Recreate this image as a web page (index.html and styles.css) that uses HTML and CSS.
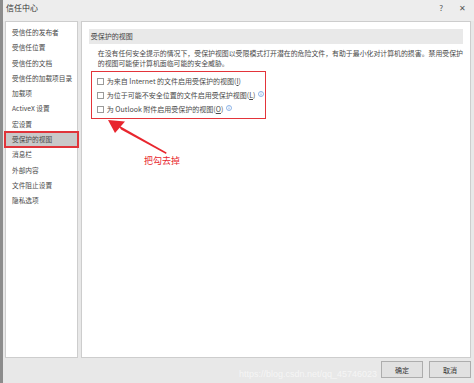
FILE: index.html
```html
<!DOCTYPE html>
<html lang="zh-CN">
<head>
<meta charset="utf-8">
<title>信任中心</title>
<link rel="stylesheet" href="styles.css">
</head>
<body>
<div class="window">
  <div class="titlebar">
    <span class="title">信任中心</span>
    <span class="tb-btns"><span class="help">?</span><span class="close">✕</span></span>
  </div>
  <div class="main">
    <ul class="sidebar">
      <li>受信任的发布者</li>
      <li>受信任位置</li>
      <li>受信任的文档</li>
      <li>受信任的加载项目录</li>
      <li>加载项</li>
      <li>ActiveX 设置</li>
      <li>宏设置</li>
      <li class="active">受保护的视图</li>
      <li>消息栏</li>
      <li>外部内容</li>
      <li>文件阻止设置</li>
      <li>隐私选项</li>
    </ul>
    <div class="content">
      <div class="section-head">受保护的视图</div>
      <p class="desc">在没有任何安全提示的情况下，受保护视图以受限模式打开潜在的危险文件，有助于最小化对计算机的损害。禁用受保护<br>的视图可能使计算机面临可能的安全威胁。</p>
      <div class="options">
        <label class="opt"><span class="cb"></span>为来自 Internet 的文件启用受保护的视图(<u>I</u>)</label>
        <label class="opt"><span class="cb"></span>为位于可能不安全位置的文件启用受保护视图(<u>L</u>)<svg class="info" viewBox="0 0 10 10"><circle cx="5" cy="5" r="4.2" fill="none" stroke="#4a86d8" stroke-width="1"/><rect x="4.5" y="4.2" width="1" height="3.2" fill="#4a86d8"/><rect x="4.5" y="2.5" width="1" height="1" fill="#4a86d8"/></svg></label>
        <label class="opt"><span class="cb"></span>为 Outlook 附件启用受保护的视图(<u>O</u>)<svg class="info" viewBox="0 0 10 10"><circle cx="5" cy="5" r="4.2" fill="none" stroke="#4a86d8" stroke-width="1"/><rect x="4.5" y="4.2" width="1" height="3.2" fill="#4a86d8"/><rect x="4.5" y="2.5" width="1" height="1" fill="#4a86d8"/></svg></label>
      </div>
    </div>
  </div>
  <div class="footer">
    <span class="watermark">https://blog.csdn.net/qq_45746023</span>
    <button class="btn">确定</button>
    <button class="btn">取消</button>
  </div>
  <svg class="arrow" width="474" height="383" viewBox="0 0 474 383">
    <polygon points="108,120 125,121.5 115,133" fill="#e8262e"/>
    <polygon points="118,125 121,129.5 166,154 166.6,152.6" fill="#e8262e"/>
  </svg>
  <div class="note">把勾去掉</div>
</div>
</body>
</html>
```
FILE: styles.css
```css
* { box-sizing: border-box; }
html, body { margin: 0; padding: 0; }
body {
  width: 474px;
  height: 383px;
  overflow: hidden;
  background: #e6e6e6;
  font-family: "Noto Sans CJK SC", "Noto Sans", sans-serif;
  color: #3c3c3c;
}
.window {
  position: relative;
  width: 474px;
  height: 383px;
  display: flex;
  flex-direction: column;
  border-left: 3px solid #8c8c8c;
  background: #e8e8e8;
}
.titlebar {
  height: 21px;
  display: flex;
  align-items: flex-start;
  justify-content: space-between;
  padding: 2px 8px 0 3px;
  background: #ededed;
}
.title { font-size: 8px; line-height: 12px; color: #333; }
.tb-btns { display: flex; gap: 16px; font-size: 8px; line-height: 12px; color: #555; }
.main {
  flex: 1;
  display: flex;
  gap: 3px;
  padding: 0 3px 0 2px;
}
.sidebar {
  list-style: none;
  margin: 0;
  padding: 3px 0 0 0;
  width: 75px;
  background: #fff;
  border: 1px solid #cdcdcd;
}
.sidebar li {
  height: 15.3px;
  line-height: 15.3px;
  font-size: 6.7px;
  padding-left: 6px;
  color: #4a4a4a;
  white-space: nowrap;
}
.sidebar li.active {
  background: #c9c9c9;
  outline: 2px solid #e0343a;
  outline-offset: -1px;
  margin: 0 -1px;
  padding-left: 7px;
}
.content {
  flex: 1;
  background: #fff;
  border: 1px solid #cdcdcd;
  padding: 7px 7px 0 7px;
}
.section-head {
  background: #e9e9e9;
  height: 15px;
  line-height: 15px;
  font-size: 7px;
  padding-left: 2px;
  color: #444;
}
.desc {
  margin: 5px 0 0 9px;
  font-size: 6.9px;
  line-height: 9.5px;
  white-space: nowrap;
  color: #4a4a4a;
}
.options {
  margin: 3px 0 0 2px;
  width: 175px;
  border: 1.5px solid #e3343a;
  padding: 2px 0 2px 5px;
  display: flex;
  flex-direction: column;
}
.opt {
  display: flex;
  align-items: center;
  height: 14px;
  font-size: 7px;
  color: #4a4a4a;
  white-space: nowrap;
}
.opt u { text-decoration: underline; }
.cb {
  width: 7px;
  height: 7px;
  border: 1px solid #9a9a9a;
  background: #fff;
  margin-right: 3px;
  flex: none;
}
.info { width: 6px; height: 6px; margin-left: 3px; margin-top: -3px; }
.footer {
  height: 25px;
  display: flex;
  justify-content: flex-end;
  align-items: flex-start;
  gap: 6px;
  padding: 3px 3px 0 0;
}
.watermark {
  align-self: flex-end;
  margin-bottom: 3px;
  margin-right: -2px;
  font-family: "Liberation Sans", sans-serif;
  font-size: 9px;
  line-height: 11px;
  color: rgba(255, 255, 255, 0.6);
  white-space: nowrap;
}
.btn {
  width: 42px;
  height: 17px;
  padding: 0;
  border: 1px solid #adadad;
  background: #e1e1e1;
  font-family: "Noto Sans CJK SC", sans-serif;
  font-size: 7px;
  color: #333;
}
.arrow { position: absolute; left: -3px; top: 0; pointer-events: none; }
.note {
  position: absolute;
  left: 141px;
  top: 155px;
  font-size: 9px;
  line-height: 12px;
  color: #e8262e;
}
```
